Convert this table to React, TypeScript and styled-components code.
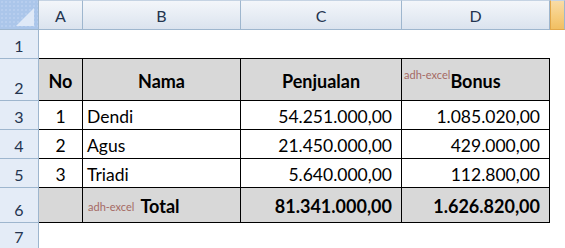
import React from 'react';
import styled, { createGlobalStyle, css } from 'styled-components';

const GlobalStyle = createGlobalStyle`
  html, body {
    margin: 0;
    padding: 0;
    background: #ffffff;
    overflow: hidden;
  }
`;

const cols = ['A', 'B', 'C', 'D'];

type Row = {
  no: string;
  nama: string;
  penjualan: string;
  bonus: string;
};

const rows: Row[] = [
  { no: '1', nama: 'Dendi', penjualan: '54.251.000,00', bonus: '1.085.020,00' },
  { no: '2', nama: 'Agus', penjualan: '21.450.000,00', bonus: '429.000,00' },
  { no: '3', nama: 'Triadi', penjualan: '5.640.000,00', bonus: '112.800,00' },
];

function App() {
  return (
    <>
      <GlobalStyle />
      <Sheet>
        <Corner>
          <svg width="38" height="29" viewBox="0 0 38 29">
            <polygon points="34,8 34,26 16,26" fill="#dfe9f7" />
          </svg>
        </Corner>
        {cols.map((c) => (
          <ColHeader key={c}>{c}</ColHeader>
        ))}
        <ColHeader $selected />

        {/* row 1 */}
        <RowHeader>1</RowHeader>
        <Cell $topEdge />
        <Cell $topEdge />
        <Cell $topEdge />
        <Cell $topEdge />
        <Cell />

        {/* row 2 */}
        <RowHeader $align="bottom">2</RowHeader>
        <Cell $boxed $shade $align="center" $bold>No</Cell>
        <Cell $boxed $shade $align="center" $bold>Nama</Cell>
        <Cell $boxed $shade $align="center" $bold>Penjualan</Cell>
        <Cell $boxed $shade $align="left" $bold>
          <Mark $sup>adh-excel</Mark>Bonus
        </Cell>
        <Cell />

        {rows.map((r, i) => (
          <React.Fragment key={r.no}>
            <RowHeader>{i + 3}</RowHeader>
            <Cell $boxed $align="center">{r.no}</Cell>
            <Cell $boxed $align="left">{r.nama}</Cell>
            <Cell $boxed $align="right">{r.penjualan}</Cell>
            <Cell $boxed $align="right">{r.bonus}</Cell>
            <Cell />
          </React.Fragment>
        ))}

        {/* row 6 */}
        <RowHeader $align="bottom">6</RowHeader>
        <Cell $boxed $shade />
        <Cell $boxed $shade $align="left" $bold>
          <Mark>adh-excel</Mark>Total
        </Cell>
        <Cell $boxed $shade $align="right" $bold>81.341.000,00</Cell>
        <Cell $boxed $shade $align="right" $bold>1.626.820,00</Cell>
        <Cell />

        {/* row 7 */}
        <RowHeader>7</RowHeader>
        <Cell />
        <Cell />
        <Cell />
        <Cell />
        <Cell />
      </Sheet>
    </>
  );
}

const Sheet = styled.div`
  display: grid;
  grid-template-columns: 39px 44px 158px 161px 148px 1fr;
  grid-template-rows: 30px 29px 42px 29px 29px 29px 35px 26px;
  width: 565px;
  height: 248px;
  overflow: hidden;
  font-family: Lato, 'Liberation Sans', sans-serif;
`;

const headerText = css`
  font-family: Lato, 'Liberation Sans', sans-serif;
  font-size: 16px;
  color: #23344f;
  box-sizing: border-box;
`;

const Corner = styled.div`
  box-sizing: border-box;
  border-right: 1px solid #9eb6ce;
  border-bottom: 1px solid #9eb6ce;
  background-color: #abc6ea;
  background-image: radial-gradient(#c3d6f1 0.6px, transparent 0.8px);
  background-size: 4px 4px;
  svg {
    display: block;
  }
`;

const ColHeader = styled.div<{ $selected?: boolean }>`
  ${headerText};
  display: flex;
  align-items: center;
  justify-content: center;
  border-right: 1px solid #9eb6ce;
  border-bottom: 1px solid #9eb6ce;
  border-top: 1px solid #c5d3e3;
  background: linear-gradient(#f3f6fa, #e6ecf4 55%, #dbe3ee);
  ${(p) =>
    p.$selected &&
    css`
      background: linear-gradient(#f9dca6, #f6cd7e 55%, #f1bf62);
      border-bottom-color: #e2a84a;
      border-left: 1px solid #e2a84a;
    `}
`;

const RowHeader = styled.div<{ $align?: 'center' | 'bottom' }>`
  ${headerText};
  display: flex;
  justify-content: center;
  align-items: ${(p) => (p.$align === 'bottom' ? 'flex-end' : 'center')};
  padding-bottom: ${(p) => (p.$align === 'bottom' ? '3px' : '0')};
  padding-top: ${(p) => (p.$align === 'bottom' ? '0' : '2px')};
  background: #e4ecf7;
  border-right: 1px solid #9eb6ce;
  border-bottom: 1px solid #9eb6ce;
`;

const Cell = styled.div<{
  $boxed?: boolean;
  $shade?: boolean;
  $topEdge?: boolean;
  $bold?: boolean;
  $align?: 'left' | 'center' | 'right';
}>`
  box-sizing: border-box;
  display: flex;
  align-items: center;
  padding: 2px 9px 0 4px;
  font-size: ${(p) => (p.$bold ? '18px' : '17.5px')};
  color: #000;
  white-space: nowrap;
  font-weight: ${(p) => (p.$bold ? 700 : 400)};
  justify-content: ${(p) =>
    p.$align === 'right' ? 'flex-end' : p.$align === 'center' ? 'center' : 'flex-start'};
  ${(p) => p.$align === 'center' && 'padding: 2px 0 0 0;'}
  background: ${(p) => (p.$shade ? '#d8d8d8' : '#ffffff')};
  ${(p) =>
    p.$boxed &&
    css`
      border-right: 1px solid #000;
      border-bottom: 1px solid #000;
    `}
  ${(p) => p.$topEdge && 'border-bottom: 1px solid #000;'}
`;

const Mark = styled.span<{ $sup?: boolean }>`
  font-size: 11px;
  font-weight: 400;
  color: #a56a64;
  margin-right: ${(p) => (p.$sup ? '0' : '6px')};
  margin-left: ${(p) => (p.$sup ? '-2px' : '1px')};
  position: relative;
  top: ${(p) => (p.$sup ? '-6px' : '0')};
`;

export default App;
